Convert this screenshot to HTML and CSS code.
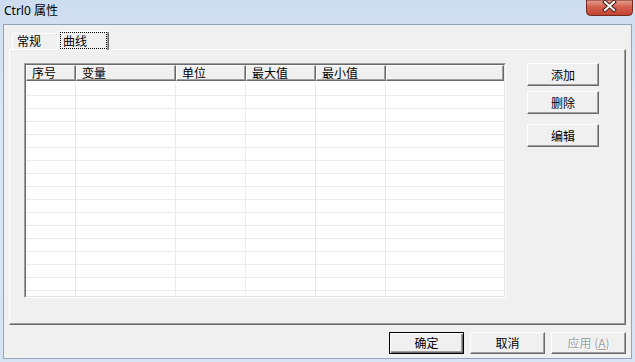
FILE: index.html
```html
<!DOCTYPE html>
<html>
<head>
<meta charset="utf-8">
<link rel="stylesheet" href="styles.css">
</head>
<body>
<div class="window">
  <div class="titlebar">
    <span class="title">Ctrl0 属性</span>
    <div class="close">
      <svg width="47" height="16" viewBox="0 0 47 16">
        <defs>
          <linearGradient id="cg" x1="0" y1="0" x2="0" y2="1">
            <stop offset="0" stop-color="#e7a293"/>
            <stop offset="0.45" stop-color="#d4604f"/>
            <stop offset="1" stop-color="#c2412f"/>
          </linearGradient>
        </defs>
        <path d="M0.5,0 V11.5 Q0.5,15.5 4.5,15.5 H42.5 Q46.5,15.5 46.5,11.5 V0 Z" fill="url(#cg)" stroke="#6f2a20"/>
        <path d="M19,2 L28,10 M28,2 L19,10" stroke="#4a1a12" stroke-width="4" stroke-linecap="square" fill="none"/>
        <path d="M19,2 L28,10 M28,2 L19,10" stroke="#ffffff" stroke-width="2" stroke-linecap="square" fill="none"/>
      </svg>
    </div>
  </div>
  <div class="client">
    <div class="tabs">
      <div class="tab">常规</div>
      <div class="tab active"><span class="focus">曲线</span></div>
    </div>
    <div class="panel">
      <div class="list">
        <div class="list-inner">
          <div class="lv-head">
            <div class="hc c1">序号</div>
            <div class="hc c2">变量</div>
            <div class="hc c3">单位</div>
            <div class="hc c4">最大值</div>
            <div class="hc c5">最小值</div>
            <div class="hc c6"></div>
          </div>
          <div class="lv-body">
            <div class="row"><div class="cell c1"></div><div class="cell c2"></div><div class="cell c3"></div><div class="cell c4"></div><div class="cell c5"></div><div class="cell c6"></div></div>
            <div class="row"><div class="cell c1"></div><div class="cell c2"></div><div class="cell c3"></div><div class="cell c4"></div><div class="cell c5"></div><div class="cell c6"></div></div>
            <div class="row"><div class="cell c1"></div><div class="cell c2"></div><div class="cell c3"></div><div class="cell c4"></div><div class="cell c5"></div><div class="cell c6"></div></div>
            <div class="row"><div class="cell c1"></div><div class="cell c2"></div><div class="cell c3"></div><div class="cell c4"></div><div class="cell c5"></div><div class="cell c6"></div></div>
            <div class="row"><div class="cell c1"></div><div class="cell c2"></div><div class="cell c3"></div><div class="cell c4"></div><div class="cell c5"></div><div class="cell c6"></div></div>
            <div class="row"><div class="cell c1"></div><div class="cell c2"></div><div class="cell c3"></div><div class="cell c4"></div><div class="cell c5"></div><div class="cell c6"></div></div>
            <div class="row"><div class="cell c1"></div><div class="cell c2"></div><div class="cell c3"></div><div class="cell c4"></div><div class="cell c5"></div><div class="cell c6"></div></div>
            <div class="row"><div class="cell c1"></div><div class="cell c2"></div><div class="cell c3"></div><div class="cell c4"></div><div class="cell c5"></div><div class="cell c6"></div></div>
            <div class="row"><div class="cell c1"></div><div class="cell c2"></div><div class="cell c3"></div><div class="cell c4"></div><div class="cell c5"></div><div class="cell c6"></div></div>
            <div class="row"><div class="cell c1"></div><div class="cell c2"></div><div class="cell c3"></div><div class="cell c4"></div><div class="cell c5"></div><div class="cell c6"></div></div>
            <div class="row"><div class="cell c1"></div><div class="cell c2"></div><div class="cell c3"></div><div class="cell c4"></div><div class="cell c5"></div><div class="cell c6"></div></div>
            <div class="row"><div class="cell c1"></div><div class="cell c2"></div><div class="cell c3"></div><div class="cell c4"></div><div class="cell c5"></div><div class="cell c6"></div></div>
            <div class="row"><div class="cell c1"></div><div class="cell c2"></div><div class="cell c3"></div><div class="cell c4"></div><div class="cell c5"></div><div class="cell c6"></div></div>
            <div class="row"><div class="cell c1"></div><div class="cell c2"></div><div class="cell c3"></div><div class="cell c4"></div><div class="cell c5"></div><div class="cell c6"></div></div>
            <div class="row"><div class="cell c1"></div><div class="cell c2"></div><div class="cell c3"></div><div class="cell c4"></div><div class="cell c5"></div><div class="cell c6"></div></div>
            <div class="row"><div class="cell c1"></div><div class="cell c2"></div><div class="cell c3"></div><div class="cell c4"></div><div class="cell c5"></div><div class="cell c6"></div></div>
            <div class="row last"><div class="cell c1"></div><div class="cell c2"></div><div class="cell c3"></div><div class="cell c4"></div><div class="cell c5"></div><div class="cell c6"></div></div>
          </div>
        </div>
      </div>
      <div class="side">
        <button class="btn side-btn">添加</button>
        <button class="btn side-btn b2">删除</button>
        <button class="btn side-btn b3">编辑</button>
      </div>
    </div>
    <div class="footer">
      <button class="btn foot-btn default">确定</button>
      <button class="btn foot-btn">取消</button>
      <button class="btn foot-btn disabled">应用 (<u>A</u>)</button>
    </div>
  </div>
</div>
</body>
</html>
```
FILE: styles.css
```css
html, body {
  margin: 0;
  padding: 0;
}
body {
  width: 635px;
  height: 362px;
  overflow: hidden;
  background: linear-gradient(#cddcef, #dae6f4 30%, #d7e3f2);
  font-family: "Noto Sans CJK SC", sans-serif;
  font-size: 12px;
  color: #000;
}
.window {
  display: flex;
  flex-direction: column;
  height: 362px;
}
.titlebar {
  height: 24px;
  display: flex;
  align-items: flex-start;
  padding-left: 4px;
  flex: none;
}
.title {
  font-family: "Noto Sans", "Noto Sans CJK SC", sans-serif;
  font-size: 12px;
  line-height: 16px;
  padding-top: 3px;
}
.close {
  margin-left: auto;
  margin-right: 2px;
  width: 47px;
  height: 16px;
}
.close svg {
  display: block;
}
.client {
  flex: 1;
  margin: 0 3px 3px 3px;
  border: 1px solid #95a3b6;
  background: #f0f0f0;
  display: flex;
  flex-direction: column;
}
.tabs {
  display: flex;
  align-items: flex-end;
  margin-top: 6px;
  margin-bottom: -1px;
  padding-left: 8px;
  height: 19px;
  position: relative;
  z-index: 1;
}
.tab {
  box-sizing: border-box;
  height: 16px;
  width: 47px;
  margin-bottom: 1px;
  border-top: 1px solid #fff;
  border-left: 1px solid #fff;
  border-right: 1px solid #696969;
  border-radius: 2px 2px 0 0;
  box-shadow: inset -1px 0 #a0a0a0;
  background: #f0f0f0;
  padding-left: 4px;
  line-height: 14px;
  white-space: nowrap;
}
.tab.active {
  height: 19px;
  width: 52px;
  margin-left: -2px;
  margin-bottom: 0;
  padding-left: 2px;
  position: relative;
  z-index: 2;
}
.focus {
  display: block;
  box-sizing: border-box;
  width: 47px;
  height: 17px;
  border: 1px dotted #000;
  padding-left: 2px;
  line-height: 15px;
}
.panel {
  box-sizing: border-box;
  height: 276px;
  margin: 0 5px;
  border: 1px solid;
  border-color: #fff #696969 #696969 #fff;
  box-shadow: inset -1px -1px #a0a0a0;
  display: flex;
  align-items: flex-start;
  padding: 13px 0 0 14px;
  gap: 21px;
}
.list {
  box-sizing: border-box;
  width: 482px;
  height: 235px;
  border: 1px solid;
  border-color: #a0a0a0 #fff #fff #a0a0a0;
  flex: none;
}
.list-inner {
  box-sizing: border-box;
  height: 100%;
  border: 1px solid;
  border-color: #696969 #e3e3e3 #e3e3e3 #696969;
  background: #fff;
  overflow: hidden;
}
.lv-head {
  display: flex;
  height: 16px;
}
.hc {
  box-sizing: border-box;
  height: 16px;
  border-top: 1px solid #fff;
  border-left: 1px solid #fff;
  border-right: 1px solid #696969;
  border-bottom: 1px solid #696969;
  box-shadow: inset -1px -1px #a0a0a0;
  background: #f0f0f0;
  padding-left: 5px;
  line-height: 14px;
  white-space: nowrap;
}
.c1 { width: 50px; flex: none; }
.c2 { width: 100px; flex: none; }
.c3 { width: 70px; flex: none; }
.c4 { width: 70px; flex: none; }
.c5 { width: 70px; flex: none; }
.c6 { flex: 1; }
.lv-body {
  padding-top: 2px;
}
.row {
  display: flex;
  box-sizing: border-box;
  height: 13px;
  border-bottom: 1px solid #ebebeb;
}
.cell {
  box-sizing: border-box;
  border-right: 1px solid #ebebeb;
}
.cell.c6 {
  border-right: none;
}
.side {
  display: flex;
  flex-direction: column;
  width: 72px;
  flex: none;
}
.btn {
  box-sizing: border-box;
  font-family: "Noto Sans CJK SC", sans-serif;
  font-size: 12px;
  color: #000;
  background: #f0f0f0;
  border: 1px solid;
  border-color: #fff #696969 #696969 #fff;
  box-shadow: inset -1px -1px #a0a0a0;
  padding: 0;
  margin: 0;
  line-height: 14px;
  border-radius: 0;
}
.side-btn {
  width: 72px;
  height: 23px;
}
.side-btn.b2 {
  margin-top: 5px;
}
.side-btn.b3 {
  margin-top: 10px;
}
.footer {
  display: flex;
  justify-content: flex-end;
  gap: 6px;
  margin-top: 7px;
  padding-right: 5px;
}
.foot-btn {
  width: 75px;
  height: 22px;
}
.foot-btn.default {
  border: 1px solid #000;
  box-shadow: inset 1px 1px #fff, inset -1px -1px #696969, inset -2px -2px #a0a0a0;
}
.foot-btn.disabled {
  color: #a0a0a0;
  text-shadow: 1px 1px #fff;
}
.foot-btn.disabled u {
  text-decoration: underline;
}
```
